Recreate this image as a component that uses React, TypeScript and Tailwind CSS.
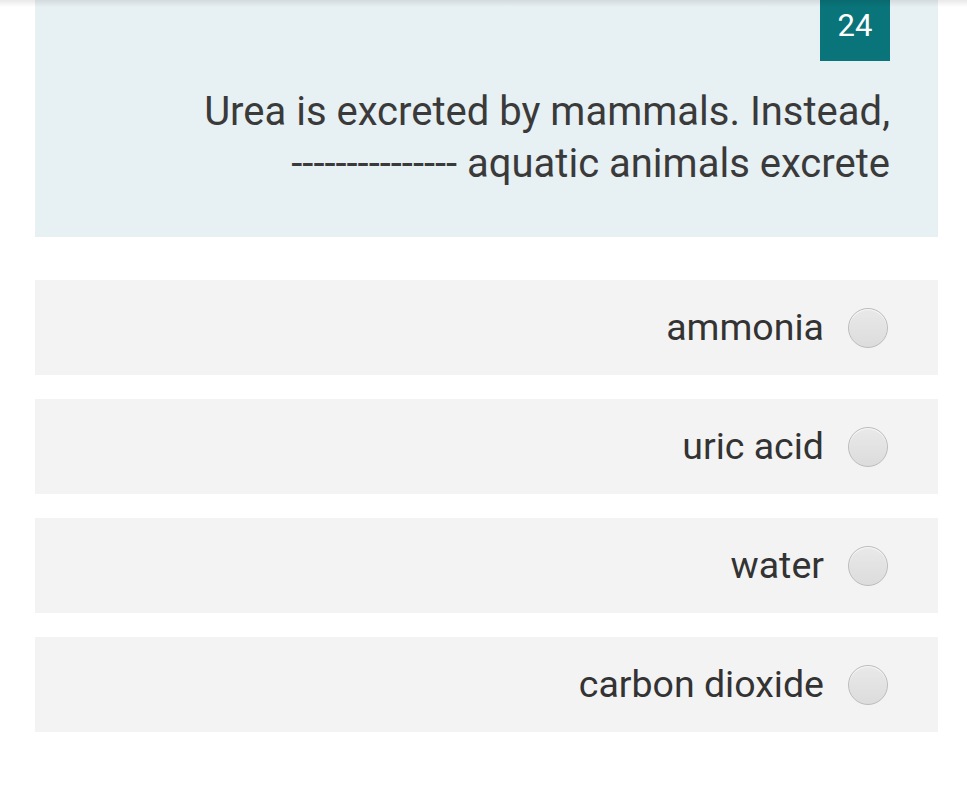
import React from 'react';

const options = ['ammonia', 'uric acid', 'water', 'carbon dioxide'];

function Radio() {
  return (
    <span className="block h-[40px] w-[40px] shrink-0 rounded-full border border-[#bcbcbc] bg-gradient-to-b from-[#e9e9e9] to-[#dcdcdc] shadow-[inset_0_1px_1px_rgba(255,255,255,0.8)]" />
  );
}

export default function App() {
  return (
    <div className="relative min-h-[811px] bg-white font-['Roboto',sans-serif] text-[#333333]">
      {/* soft shadow from the bar above */}
      <div className="pointer-events-none absolute inset-x-0 top-0 h-[7px] bg-gradient-to-b from-[rgba(0,0,0,0.09)] to-transparent" />
      <div className="ml-[35px] mr-[29px] flex h-[237px] flex-col items-end bg-[#e7f0f3] pr-[48px]">
        <div className="flex h-[61px] w-[70px] justify-center bg-[#097479] pt-[7px] text-[31px] leading-[37px] text-white">
          24
        </div>
        <p className="mt-[25px] text-right text-[40px] leading-[52px] text-[#3a3a3a]">
          Urea is excreted by mammals. Instead,
          <br />
          --------------- aquatic animals excrete
        </p>
      </div>
      <div className="ml-[35px] mr-[29px] mt-[43px] flex flex-col gap-[24px]">
        {options.map((o) => (
          <label
            key={o}
            className="flex h-[95px] items-center justify-end gap-[24px] bg-[#f3f3f3] pr-[50px]"
          >
            <span className="text-[37.5px] text-[#333333]">{o}</span>
            <Radio />
          </label>
        ))}
      </div>
    </div>
  );
}
